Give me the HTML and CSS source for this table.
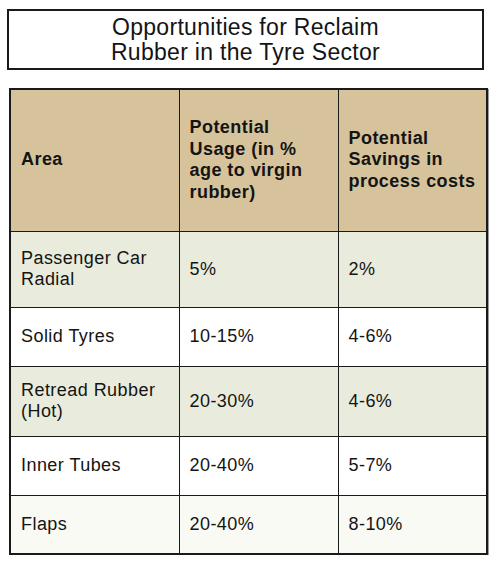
FILE: index.html
```html
<!DOCTYPE html>
<html lang="en">
<head>
    <meta charset="UTF-8">
    <title>Reclaim Rubber in the Tyre Sector</title>
    <link rel="stylesheet" href="styles.css">
</head>
<body>
    <div class="page">
        <!-- Title -->
        <div class="title-box">
            <h1>Opportunities for Reclaim<br>Rubber in the Tyre Sector</h1>
        </div>

        <!-- Data table -->
        <table class="usage-table">
            <colgroup>
                <col class="col-area">
                <col class="col-usage">
                <col class="col-savings">
            </colgroup>
            <thead>
                <tr class="head-row">
                    <th>Area</th>
                    <th>Potential Usage (in % age to virgin rubber)</th>
                    <th>Potential Savings in process costs</th>
                </tr>
            </thead>
            <tbody>
                <tr class="row-tall shade">
                    <td>Passenger Car Radial</td>
                    <td>5%</td>
                    <td>2%</td>
                </tr>
                <tr class="row-short">
                    <td>Solid Tyres</td>
                    <td>10-15%</td>
                    <td>4-6%</td>
                </tr>
                <tr class="row-mid shade">
                    <td>Retread Rubber (Hot)</td>
                    <td>20-30%</td>
                    <td>4-6%</td>
                </tr>
                <tr class="row-short">
                    <td>Inner Tubes</td>
                    <td>20-40%</td>
                    <td>5-7%</td>
                </tr>
                <tr class="row-short pale">
                    <td>Flaps</td>
                    <td>20-40%</td>
                    <td>8-10%</td>
                </tr>
            </tbody>
        </table>
    </div>
</body>
</html>
```

FILE: styles.css
```css
:root {
    --ink: #141414;
    --head-bg: #d6c39b;
    --shade-bg: #e9ecdc;
    --pale-bg: #f9faf4;
    --line: #1a1a1a;
}

* {
    margin: 0;
    padding: 0;
    box-sizing: border-box;
}

body {
    background: white;
    color: var(--ink);
    font-family: 'Liberation Sans', Arial, sans-serif;
}

.page {
    padding: 9px 0 0 7px;
}

.title-box {
    width: 477px;
    height: 61px;
    border: 2px solid var(--line);
    display: flex;
    align-items: center;
    justify-content: center;
}

h1 {
    font-size: 23px;
    font-weight: normal;
    line-height: 25px;
    letter-spacing: 0.3px;
    text-align: center;
}

.usage-table {
    margin: 18px 0 0 2px;
    width: 477px;
    border-collapse: collapse;
    table-layout: fixed;
    border: 2px solid var(--line);
    box-shadow: 1px 1px 0 #9a9a9a;
    font-size: 18px;
    letter-spacing: 0.45px;
    line-height: 21px;
}

.col-area { width: 169px; }
.col-usage { width: 159px; }
.col-savings { width: 149px; }

th, td {
    border: 1.5px solid var(--line);
    padding: 0 10px;
    text-align: left;
    vertical-align: middle;
}

th {
    font-weight: bold;
    line-height: 21.7px;
}

.head-row {
    height: 142px;
    background: var(--head-bg);
}

.shade { background: var(--shade-bg); }
.pale { background: var(--pale-bg); }

.row-tall { height: 76px; }
.row-mid { height: 70px; }
.row-short { height: 59px; }
```
